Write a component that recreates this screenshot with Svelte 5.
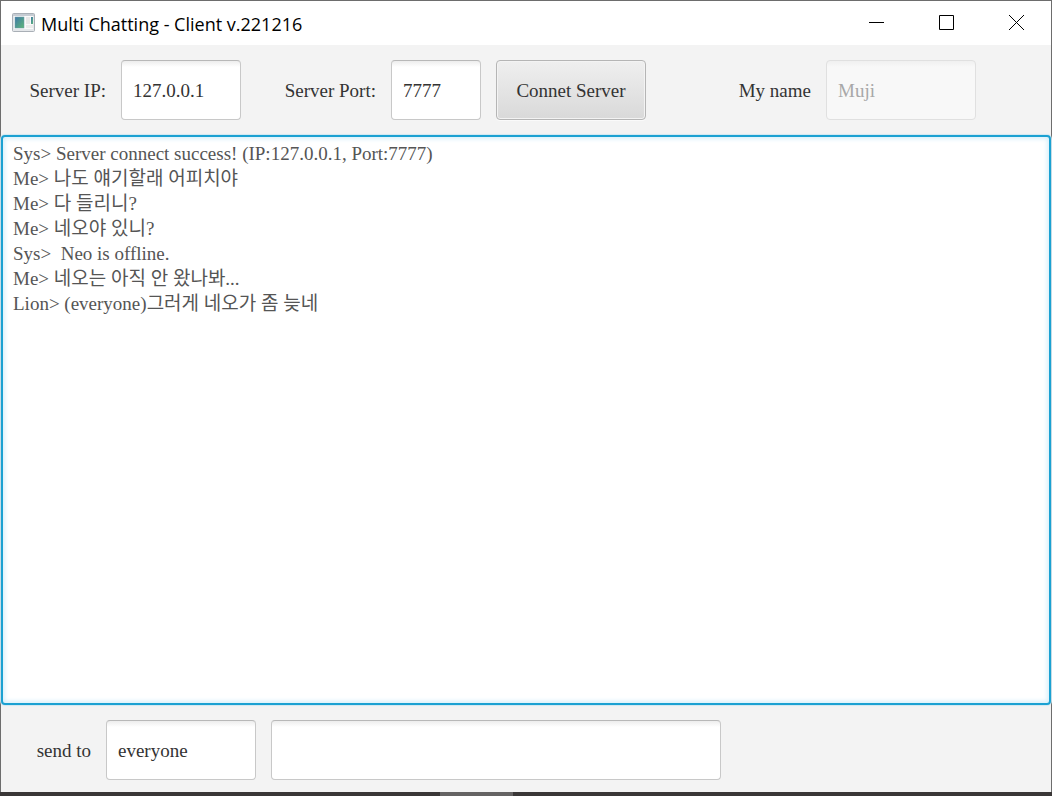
<script>
  let serverIp = '127.0.0.1';
  let serverPort = '7777';
  let myName = 'Muji';
  let sendTo = 'everyone';
  let message = '';

  let log = [
    'Sys> Server connect success! (IP:127.0.0.1, Port:7777)',
    'Me> 나도 얘기할래 어피치야',
    'Me> 다 들리니?',
    'Me> 네오야 있니?',
    'Sys>  Neo is offline.',
    'Me> 네오는 아직 안 왔나봐...',
    'Lion> (everyone)그러게 네오가 좀 늦네'
  ].join('\n');
</script>

<div class="desktop">
  <main class="window">
    <header class="titlebar">
      <svg class="app-icon" width="23" height="19" viewBox="0 0 23 19" aria-hidden="true">
        <defs>
          <linearGradient id="pane" x1="0" y1="0" x2="1" y2="1">
            <stop offset="0" stop-color="#3f78a8" />
            <stop offset="1" stop-color="#5fb878" />
          </linearGradient>
        </defs>
        <rect x="0.5" y="0.5" width="22" height="18" rx="1" fill="#e4e7ea" stroke="#a9afb6" />
        <rect x="1" y="1" width="21" height="2" fill="#c6ccd3" />
        <rect x="2" y="3" width="19" height="13" fill="#fafafa" />
        <rect x="3" y="4" width="9" height="11" fill="url(#pane)" stroke="#6f9aa8" stroke-width="0.5" />
        <rect x="14" y="4" width="4" height="7" fill="#e8e8e8" />
        <rect x="19" y="4" width="2" height="7" fill="url(#pane)" />
        <rect x="14" y="12" width="7" height="3" fill="#ebebeb" />
      </svg>
      <h1>Multi Chatting - Client v.221216</h1>
      <div class="window-buttons">
        <button type="button" aria-label="Minimize">
          <svg width="15" height="15" viewBox="0 0 15 15"><path d="M0 7.5h15" /></svg>
        </button>
        <button type="button" aria-label="Maximize">
          <svg width="15" height="15" viewBox="0 0 15 15"><path d="M0.5 0.5h14v14h-14z" /></svg>
        </button>
        <button type="button" aria-label="Close">
          <svg width="15" height="15" viewBox="0 0 15 15"><path d="M0 0l15 15M15 0L0 15" /></svg>
        </button>
      </div>
    </header>

    <div class="bar">
      <label class="first" for="ip">Server IP:</label>
      <input id="ip" class="ip" type="text" bind:value={serverIp} />
      <label class="second" for="port">Server Port:</label>
      <input id="port" class="port" type="text" bind:value={serverPort} />
      <button class="connect" type="button">Connet Server</button>
      <label class="third" for="name">My name</label>
      <input id="name" class="name" type="text" value={myName} disabled />
    </div>

    <textarea class="log" aria-label="Chat log" readonly value={log}></textarea>

    <div class="bar bottom">
      <label class="send" for="to">send to</label>
      <input id="to" class="name" type="text" bind:value={sendTo} />
      <input class="message" type="text" aria-label="Message" bind:value={message} />
    </div>
  </main>
  <div class="taskbar"><div class="task"></div></div>
</div>

<style>
  :global(body) {
    background: #6d6d6d;
  }

  .desktop {
    display: flex;
    flex-direction: column;
    height: 100vh;
    box-sizing: border-box;
    font-family: "Liberation Serif", "Noto Sans CJK KR", serif;
    font-size: 19px;
    color: #333;
  }

  .window {
    flex: 1;
    display: flex;
    flex-direction: column;
    min-height: 0;
    border: 1px solid #6d6d6d;
    border-bottom: 0;
    background: #f3f3f3;
  }

  .titlebar {
    display: flex;
    align-items: center;
    height: 44px;
    padding-left: 11px;
    gap: 6px;
    background: #fff;
  }

  .app-icon {
    margin-bottom: 2px;
  }

  h1 {
    margin: 2px 0 0;
    font-family: "Open Sans", "Noto Sans CJK KR", sans-serif;
    font-size: 18px;
    font-weight: 400;
    color: #000;
  }

  .window-buttons {
    display: flex;
    align-self: stretch;
    margin-left: auto;
  }

  .window-buttons button {
    display: flex;
    align-items: center;
    justify-content: center;
    width: 70px;
    padding: 0 0 2px;
    border: 0;
    background: none;
  }

  .window-buttons svg {
    fill: none;
    stroke: #000;
    stroke-width: 1;
  }

  .bar {
    display: flex;
    align-items: center;
    gap: 15px;
    padding: 15px 0;
  }

  .bottom {
    padding-bottom: 12px;
  }

  label {
    box-sizing: border-box;
    flex-shrink: 0;
    padding-top: 2px;
    text-align: right;
    white-space: nowrap;
  }

  .first {
    width: 105px;
  }

  .second {
    width: 120px;
  }

  .third {
    width: 150px;
  }

  .send {
    width: 90px;
  }

  input,
  .connect {
    box-sizing: border-box;
    height: 60px;
    border: 1px solid #c8c8c8;
    border-radius: 4px;
    font: inherit;
    color: #333;
  }

  input {
    min-width: 0;
    padding: 2px 11px 0;
    border-top-color: #b8b8b8;
    background: linear-gradient(#ededed, #fff 6px);
  }

  input:disabled {
    border-color: #e0e0e0;
    background: linear-gradient(#f0f0f0, #f8f8f8 6px);
    color: #a8a8a8;
  }

  .ip {
    width: 120px;
  }

  .port {
    width: 90px;
  }

  .name {
    width: 150px;
  }

  .message {
    width: 450px;
  }

  .connect {
    width: 150px;
    padding: 2px 0 0;
    border-color: #b5b5b5;
    background: linear-gradient(#efefef, #d9d9d9);
    box-shadow: inset 0 0 0 1px #f3f3f3, 0 1px 0 #fafafa;
    white-space: nowrap;
  }

  .log {
    flex: 1;
    min-height: 0;
    box-sizing: border-box;
    width: 100%;
    padding: 4px 10px;
    border: 2px solid #1ba1d2;
    border-radius: 4px;
    outline: 0;
    resize: none;
    background: #fff;
    box-shadow: inset 0 0 4px 2px #d8f0fa, 0 0 1px 1px #d0e8f2;
    font: inherit;
    line-height: 25px;
    color: #555;
  }

  .taskbar {
    height: 4px;
    background: #3a3737;
  }

  .task {
    width: 73px;
    height: 4px;
    margin-left: 440px;
    background: #656363;
  }
</style>
